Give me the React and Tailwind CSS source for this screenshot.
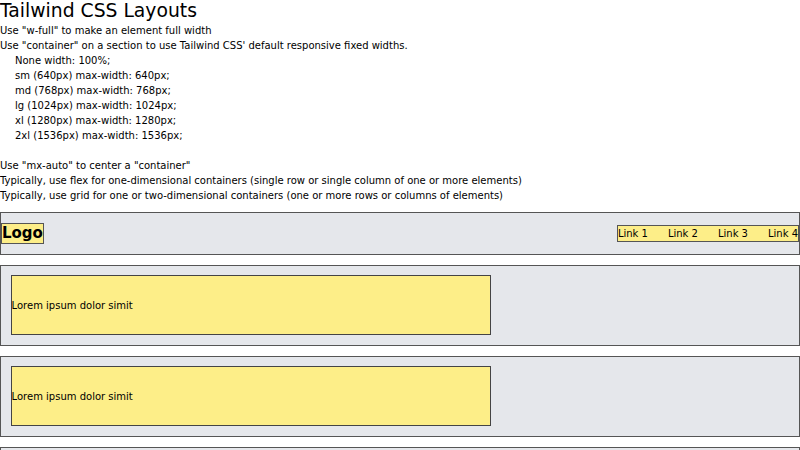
const breakpoints = [
  "None width: 100%;",
  "sm (640px) max-width: 640px;",
  "md (768px) max-width: 768px;",
  "lg (1024px) max-width: 1024px;",
  "xl (1280px) max-width: 1280px;",
  "2xl (1536px) max-width: 1536px;",
];

const links = ["Link 1", "Link 2", "Link 3", "Link 4"];

function Card() {
  return (
    <section className="mt-[10px] w-full border border-[#555] bg-[#e5e7eb] p-[9.6px]">
      <div className="flex h-[60px] w-[480px] items-center border border-[#444] bg-[#fdee88] pt-px">
        Lorem ipsum dolor simit
      </div>
    </section>
  );
}

export default function App() {
  return (
    <div className="min-h-[450px] bg-white font-['DejaVu_Sans',sans-serif] text-[10px] leading-[15px] text-black">
      <h1 className="text-[18.75px] leading-[22.5px]">Tailwind CSS Layouts</h1>
      <p>Use "w-full" to make an element full width</p>
      <p>Use "container" on a section to use Tailwind CSS' default responsive fixed widths.</p>
      <ul className="pl-[15px]">
        {breakpoints.map((b) => (
          <li key={b}>{b}</li>
        ))}
      </ul>
      <p className="mt-[15px]">Use "mx-auto" to center a "container"</p>
      <p>Typically, use flex for one-dimensional containers (single row or single column of one or more elements)</p>
      <p>Typically, use grid for one or two-dimensional containers (one or more rows or columns of elements)</p>

      <header className="mt-[9.5px] flex w-full items-center justify-between border border-[#555] bg-[#e5e7eb] py-[10px]">
        <div className="border border-[#555] bg-[#fdee88] text-[15px] font-bold leading-[18.5px]">Logo</div>
        <ul className="flex gap-[20px] border border-[#555] bg-[#fdee88]">
          {links.map((l) => (
            <li key={l}>{l}</li>
          ))}
        </ul>
      </header>

      <Card />
      <Card />
      <Card />
    </div>
  );
}
